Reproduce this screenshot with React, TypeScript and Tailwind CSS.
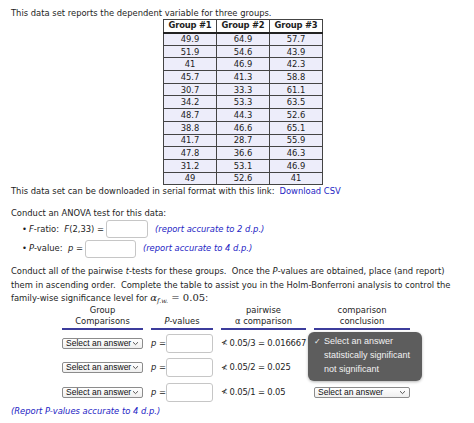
import React from "react";

const data: string[][] = [
  ["49.9", "64.9", "57.7"],
  ["51.9", "54.6", "43.9"],
  ["41", "46.9", "42.3"],
  ["45.7", "41.3", "58.8"],
  ["30.7", "33.3", "61.1"],
  ["34.2", "53.3", "63.5"],
  ["48.7", "44.3", "52.6"],
  ["38.8", "46.6", "65.1"],
  ["41.7", "28.7", "55.9"],
  ["47.8", "36.6", "46.3"],
  ["31.2", "53.1", "46.9"],
  ["49", "52.6", "41"],
];

function Chevron() {
  return (
    <svg width="7" height="5" viewBox="0 0 7 5" className="shrink-0">
      <path d="M1 1.2 L3.5 3.6 L6 1.2" fill="none" stroke="#444" strokeWidth="0.9" />
    </svg>
  );
}

function FakeSelect({ w }: { w: string }) {
  return (
    <div
      className={`${w} h-[11px] border border-[#8c8c8c] rounded-[2px] bg-gradient-to-b from-white to-[#efefef] flex items-center justify-between pl-[3px] pr-[3px] font-['Liberation_Sans',Arial,sans-serif] text-[8.5px] leading-[9px] text-[#111] whitespace-nowrap overflow-hidden`}
    >
      <span>Select an answer</span>
      <Chevron />
    </div>
  );
}

export default function App() {
  const rows = ["0.05/3 = 0.016667", "0.05/2 = 0.025", "0.05/1 = 0.05"];
  return (
    <div className="w-[474px] h-[423px] bg-white overflow-hidden text-[#1d1d1d] font-['DejaVu_Sans',sans-serif] text-[8.4px]">
      <div className="pl-[11px]">
        <p className="pt-[7px] leading-[12px]">This data set reports the dependent variable for three groups.</p>
        <table className="ml-[152px] border-collapse">
          <thead>
            <tr>
              {["Group #1", "Group #2", "Group #3"].map((h) => (
                <th
                  key={h}
                  className="w-[53px] min-w-[53px] h-[13px] p-0 border border-[#444] border-b-2 border-b-[#222] font-bold leading-[11px] tracking-[-0.2px] bg-white text-center whitespace-nowrap"
                >
                  {h}
                </th>
              ))}
            </tr>
          </thead>
          <tbody>
            {data.map((r, i) => (
              <tr key={i}>
                {r.map((c, j) => (
                  <td
                    key={j}
                    className="w-[53px] h-[12.7px] p-0 border border-[#444] bg-[#ededfa] text-center leading-[10px]"
                  >
                    {c}
                  </td>
                ))}
              </tr>
            ))}
          </tbody>
        </table>
        <p className="leading-[12px] whitespace-nowrap">
          This data set can be downloaded in serial format with this link:
          <span className="ml-[5px] text-[#2424c4]">Download CSV</span>
        </p>

        <p className="mt-[10px] leading-[12px]">Conduct an ANOVA test for this data:</p>
        <ul>
          <li className="flex items-center h-[19.5px] whitespace-nowrap">
            <span className="shrink-0 w-[18px] pl-[11px]">•</span>
            <span>
              <i>F</i>-ratio:&nbsp; <i>F</i>(2,33) =
            </span>
            <div className="shrink-0 ml-[2px] w-[42px] h-[18px] border border-[#c6c6c6] rounded-[3px] bg-white" />
            <span className="ml-[7px] italic text-[#2424c4]">(report accurate to 2 d.p.)</span>
          </li>
          <li className="flex items-center h-[19.5px] whitespace-nowrap">
            <span className="shrink-0 w-[18px] pl-[11px]">•</span>
            <span>
              <i>P</i>-value:&nbsp; <i>p</i> =
            </span>
            <div className="shrink-0 ml-[2px] w-[51px] h-[18px] border border-[#c6c6c6] rounded-[3px] bg-white" />
            <span className="ml-[7px] italic text-[#2424c4]">(report accurate to 4 d.p.)</span>
          </li>
        </ul>

        <p className="mt-[7px] leading-[13.5px] pr-[10px]">
          Conduct all of the pairwise <i>t</i>-tests for these groups.&nbsp; Once the <i>P</i>-values are obtained, place (and
          report) them in ascending order.&nbsp; Complete the table to assist you in the Holm-Bonferroni analysis to control the
          family-wise significance level for{" "}
          <span className="font-['DejaVu_Serif',serif] text-[10px] leading-[10px]">
            <i>α</i>
            <span className="relative top-[2px] text-[6.5px] italic leading-[6px]">f.w.</span> = 0.05
          </span>
          :
        </p>

        <div className="ml-[51px] relative">
          <div className="grid grid-cols-[81px_62px_85px_96px] gap-x-[8px]">
            {[
              ["Group", "Comparisons"],
              ["", "P-values"],
              ["pairwise", "α comparison"],
              ["comparison", "conclusion"],
            ].map((h, i) => (
              <div
                key={i}
                className="flex flex-col items-center justify-end leading-[11px] border-b-2 border-[#3c3c9c] pb-[1px] h-[24px] whitespace-nowrap"
              >
                {h[0] && <span>{h[0]}</span>}
                <span>
                  {i === 1 ? (
                    <>
                      <i>P</i>-values
                    </>
                  ) : (
                    h[1]
                  )}
                </span>
              </div>
            ))}
          </div>
          <div className="mt-[4px] grid grid-cols-[81px_62px_85px_96px] gap-x-[8px] gap-y-[5.5px] items-center">
            {rows.map((r, i) => (
              <React.Fragment key={i}>
                <div className="flex items-center h-[19px]">
                  <FakeSelect w="w-[81px]" />
                </div>
                <div className="flex items-center h-[19px] whitespace-nowrap">
                  <span>
                    <i>p</i> =
                  </span>
                  <div className="ml-auto shrink-0 w-[47px] h-[19px] border border-[#c6c6c6] rounded-[3px] bg-white" />
                </div>
                <div className="flex items-center h-[19px] whitespace-nowrap tracking-[-0.15px]">
                  <span className="mr-[2px] font-['DejaVu_Sans',sans-serif] text-[8px]">≮</span>
                  <span>{r}</span>
                </div>
                <div className="flex items-center h-[19px]">
                  <FakeSelect w="w-[96px]" />
                </div>
              </React.Fragment>
            ))}
          </div>
          <div className="absolute left-[246px] top-[26px] w-[114px] h-[49px] rounded-[6px] bg-[#5d5d5d] shadow-[0_1px_3px_rgba(0,0,0,0.3)] pt-[3px] font-['Liberation_Sans',Arial,sans-serif] text-[9px] text-[#f2f2f2] whitespace-nowrap">
            {["Select an answer", "statistically significant", "not significant"].map((t, i) => (
              <div key={t} className="h-[14px] flex items-center">
                <span className="shrink-0 w-[16px] pl-[6px] text-[8px]">{i === 0 ? "✓" : ""}</span>
                <span>{t}</span>
              </div>
            ))}
          </div>
        </div>

        <p className="mt-[3px] leading-[12px] italic text-[#2424c4]">(Report P-values accurate to 4 d.p.)</p>
      </div>
    </div>
  );
}
